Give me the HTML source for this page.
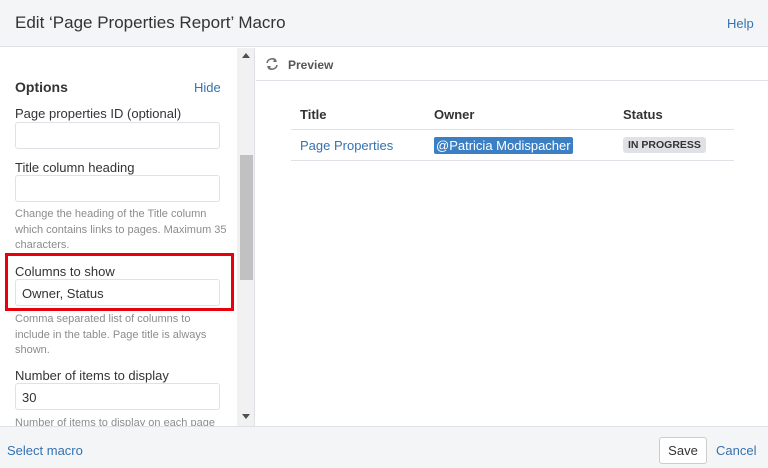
<!DOCTYPE html>
<html><head><style>
*{box-sizing:border-box;margin:0;padding:0}
body{width:768px;height:468px;overflow:hidden;font-family:"Liberation Sans",sans-serif;background:#fff;position:relative;color:#333}
.a{position:absolute}
.hdr{left:0;top:0;width:768px;height:47px;background:#f4f5f7;border-bottom:1px solid #dfe1e6}
.lbl{font-size:13px;color:#333;left:15px}
.inp{left:15px;width:205px;height:27px;border:1px solid #dfe1e6;border-radius:3px;background:#fff;font-size:13px;padding:6px 6px}
.help{left:15px;font-size:11px;color:#8c8c8c;line-height:15.5px;width:222px;white-space:nowrap}
.blue{color:#3572b0}
</style></head><body>
<div class="a hdr"></div>
<div class="a" style="left:15px;top:13px;font-size:17px;color:#333">Edit ‘Page Properties Report’ Macro</div>
<div class="a blue" style="left:727px;top:16px;font-size:13px">Help</div>

<div class="a" style="left:237px;top:48px;width:18px;height:378px;background:#f1f1f1;border-right:1px solid #dfe1e6"></div>
<div class="a" style="left:240px;top:155px;width:13px;height:125px;background:#c1c1c1"></div>
<div class="a" style="left:242px;top:53px;width:0;height:0;border-left:4px solid transparent;border-right:4px solid transparent;border-bottom:5px solid #505050"></div>
<div class="a" style="left:242px;top:414px;width:0;height:0;border-left:4px solid transparent;border-right:4px solid transparent;border-top:5px solid #505050"></div>

<div class="a" style="left:15px;top:79px;font-size:14px;font-weight:bold;color:#333">Options</div>
<div class="a blue" style="left:194px;top:80px;font-size:13px">Hide</div>
<div class="a lbl" style="top:106px">Page properties ID (optional)</div>
<div class="a inp" style="top:122px"></div>
<div class="a lbl" style="top:160px">Title column heading</div>
<div class="a inp" style="top:175px"></div>
<div class="a help" style="top:207px">Change the heading of the Title column<br>which contains links to pages. Maximum 35<br>characters.</div>
<div class="a" style="left:5px;top:253px;width:229px;height:58px;border:3px solid #e8000b"></div>
<div class="a lbl" style="top:264px">Columns to show</div>
<div class="a inp" style="top:279px;color:#333">Owner, Status</div>
<div class="a help" style="top:312px">Comma separated list of columns to<br>include in the table. Page title is always<br>shown.</div>
<div class="a lbl" style="top:368px">Number of items to display</div>
<div class="a inp" style="top:383px">30</div>
<div class="a help" style="top:416px">Number of items to display on each page</div>

<div class="a" style="left:256px;top:80px;width:512px;height:1px;background:#dfe1e6"></div>
<svg class="a" style="left:265px;top:57px" width="14" height="14" viewBox="0 0 14 14"><path d="M2 6 A5 5 0 0 1 11 4 M12 8 A5 5 0 0 1 3 10" fill="none" stroke="#707070" stroke-width="1.6"/><path d="M10 1 L12 5 L8 5Z M4 13 L2 9 L6 9Z" fill="#707070"/></svg>
<div class="a" style="left:288px;top:58px;font-size:12px;font-weight:bold;color:#555">Preview</div>

<div class="a" style="left:300px;top:107px;font-size:13px;font-weight:bold">Title</div>
<div class="a" style="left:434px;top:107px;font-size:13px;font-weight:bold">Owner</div>
<div class="a" style="left:623px;top:107px;font-size:13px;font-weight:bold">Status</div>
<div class="a" style="left:291px;top:129px;width:443px;height:1px;background:#dfe1e6"></div>
<div class="a" style="left:291px;top:160px;width:443px;height:1px;background:#dfe1e6"></div>
<div class="a blue" style="left:300px;top:138px;font-size:13px">Page Properties</div>
<div class="a" style="left:434px;top:137px;height:17px;padding:1px 2px;background:#3b7fc4;color:#fff;font-size:13px;border-radius:2px">@Patricia Modispacher</div>
<div class="a" style="left:623px;top:137px;height:16px;padding:2px 5px;background:#dfe1e6;color:#333;font-size:10.5px;font-weight:bold;border-radius:3px">IN PROGRESS</div>

<div class="a" style="left:0;top:426px;width:768px;height:42px;background:#f4f5f7;border-top:1px solid #dfe1e6"></div>
<div class="a blue" style="left:7px;top:443px;font-size:13px">Select macro</div>
<div class="a" style="left:659px;top:437px;width:48px;height:27px;background:#fff;border:1px solid #ccc;border-radius:3px;font-size:13px;text-align:center;line-height:25px">Save</div>
<div class="a blue" style="left:716px;top:443px;font-size:13px">Cancel</div>
</body></html>
